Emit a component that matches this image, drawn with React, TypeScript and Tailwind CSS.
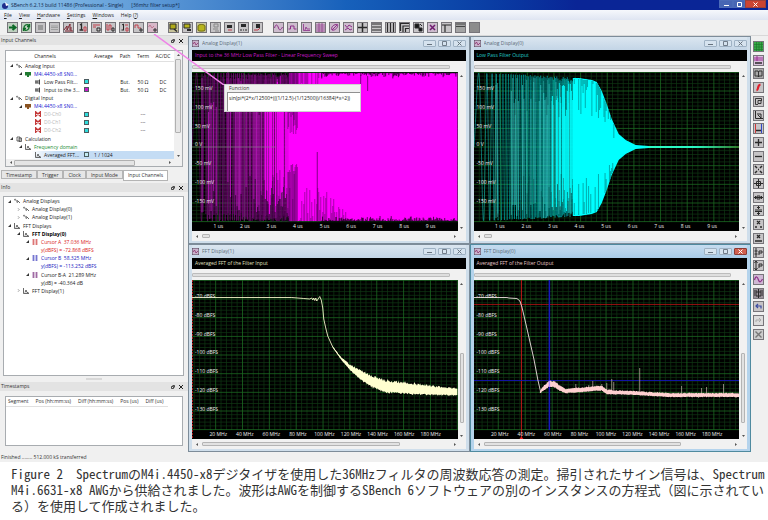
import { Fragment, type ReactNode } from 'react';
import clsx from 'clsx';

type Point = [number, number];

// small seeded generator so the traces look the same on every render
function createRandom(seed: number) {
  let value = seed;
  return () => {
    value = (value * 16807) % 2147483647;
    return value / 2147483647;
  };
}

function interpolate(points: Point[], x: number) {
  for (let i = 1; i < points.length; i++) {
    const [x0, y0] = points[i - 1];
    const [x1, y1] = points[i];
    if (x <= x1) return y0 + ((y1 - y0) * (x - x0)) / (x1 - x0);
  }
  return points[points.length - 1][1];
}

function chirpPath(amplitude: Point[], start: number, end: number) {
  let d = '';
  for (let x = start; x <= end; x += 0.12) {
    const y = 75 - interpolate(amplitude, x) * Math.sin(2 * Math.PI * (0.03 * x + 0.0052 * x * x));
    d += `${d ? 'L' : 'M'}${x.toFixed(2)} ${y.toFixed(1)}`;
  }
  return d;
}

function bandPath(center: Point[], half: Point[], seed: number) {
  const random = createRandom(seed);
  const top: string[] = [];
  const bottom: string[] = [];
  for (let x = center[0][0]; x <= 266; x += 0.6) {
    const y = interpolate(center, x);
    const h = interpolate(half, x);
    top.push(`${x.toFixed(1)} ${(y - h * (0.65 + random() * 0.5)).toFixed(1)}`);
    bottom.unshift(`${x.toFixed(1)} ${(y + h * (0.75 + random() * 0.35)).toFixed(1)}`);
  }
  return `M${top.join('L')}L${bottom.join('L')}Z`;
}

const flatEnvelope: Point[] = [[0, 74], [266, 74]];

const filterEnvelope: Point[] = [
  [0, 74], [62, 72], [105, 69], [118, 67], [123, 65], [128, 56], [133, 43], [138, 28],
  [145, 13], [152, 7], [162, 2], [175, 1], [220, 1], [266, 0],
];

function GridLines({ offset, pitch }: { offset: number; pitch: number }) {
  const minor: string[] = [];
  const major: string[] = [];
  for (let i = -5; i < 60; i++) {
    const x = offset + (i * pitch) / 5;
    if (x > 0 && x < 266) (i % 5 === 0 ? major : minor).push(`M${x.toFixed(1)} 0V150`);
  }
  for (let i = 0; i <= 40; i++) {
    const y = 0.4 + i * 3.73;
    (i % 5 === 0 ? major : minor).push(`M0 ${y.toFixed(1)}H266`);
  }
  return (
    <g fill="none">
      <path d={minor.join('')} stroke="#103814" strokeWidth="0.7" />
      <path d={major.join('')} stroke="#1c6822" strokeWidth="0.8" />
    </g>
  );
}

function InputSweep() {
  const random = createRandom(77);
  let dim = '';
  let bright = '';
  let solid = '';
  let dark = '';
  let teeth = '';
  for (let x = 10; x < 100; x += 1.3) {
    if (random() < 0.15 + x / 200) bright += `M${x.toFixed(1)} ${(random() * 45).toFixed(0)}V${(148 - random() * 45).toFixed(0)}`;
    if (random() < 0.7) dim += `M${x.toFixed(1)} ${(2 + random() * 6).toFixed(0)}V${(148 - random() * 8).toFixed(0)}`;
  }
  for (let x = 66; x < 98; x += 1) {
    if (random() < (x - 60) / 36) solid += `M${x}.5 ${(2 + random() * 30).toFixed(0)}V${(146 - random() * 34).toFixed(0)}`;
  }
  for (let x = 60; x < 156; x += 1) {
    const reach = Math.max(0, 1 - Math.abs(x - 100) / 62);
    if (random() < 0.6) dark += `M${x} 150V${(148 - reach * random() * 66).toFixed(0)}`;
    if (random() < 0.6 && x < 136) dark += `M${x} 0V${(reach * random() * 56).toFixed(0)}`;
  }
  for (let x = 96; x < 106; x += 0.8) dark += `M${x.toFixed(1)} 150V${(92 + random() * 10).toFixed(0)}M${x.toFixed(1)} 0V${(38 + random() * 25).toFixed(0)}`;
  for (let x = 130; x < 266; x += 0.8) {
    teeth += `M${x.toFixed(1)} 0v${(1 + random() * random() * 6).toFixed(1)}`;
    teeth += `M${x.toFixed(1)} 150v-${(1 + random() * random() * 6).toFixed(1)}`;
  }
  return (
    <g fill="none">
      <path d={chirpPath(flatEnvelope, 0, 98)} stroke="#a800a8" strokeWidth="0.36" />
      <path d={dim} stroke="#7c0a80" strokeWidth="0.6" />
      <path d={bright} stroke="#d81cdc" strokeWidth="0.6" />
      <path d={solid} stroke="#ff00ff" strokeWidth="1" />
      <path d="M97 1H266V149H97Z" fill="#ff00ff" />
      <path d={dark} stroke="#2a0430" strokeOpacity="0.65" strokeWidth="0.6" />
      <path d={teeth} stroke="#08000a" strokeWidth="0.7" />
      <path d="M125.500 80V150M176 4V19M169 3V13" stroke="#4c0050" strokeWidth="0.7" />
      <path d="M0 75H84" stroke="#8a8a8a" strokeWidth="0.5" />
    </g>
  );
}

function OutputSweep() {
  const random = createRandom(421);
  let bright = '';
  let solid = '';
  let dark = '';
  for (let x = 22; x < 97; x += 1.4) {
    const a = interpolate(filterEnvelope, x);
    if (random() < 0.25 + x / 180) bright += `M${x.toFixed(1)} ${(75 - a + random() * 30).toFixed(0)}V${(75 + a - random() * 20).toFixed(0)}`;
  }
  for (let x = 78; x < 101; x += 1) {
    const a = interpolate(filterEnvelope, x);
    if (random() < (x - 70) / 30) solid += `M${x}.5 ${(75 - a + random() * 40).toFixed(0)}V${(75 + a - random() * 40).toFixed(0)}`;
  }
  for (let x = 40; x < 142; x += 1.1) {
    const a = interpolate(filterEnvelope, x);
    if (random() < 0.5) dark += `M${x.toFixed(1)} ${(75 - a + 1).toFixed(0)}v${(random() * a * 0.6).toFixed(0)}`;
    if (random() < 0.5) dark += `M${x.toFixed(1)} ${(75 + a - 1).toFixed(0)}v-${(random() * a * 0.6).toFixed(0)}`;
  }
  const edge = filterEnvelope.filter(([x]) => x > 100);
  const upper = edge.map(([x, a]) => `${x} ${75 - a}`);
  const lower = edge.map(([x, a]) => `${x} ${75 + a}`).reverse();
  return (
    <g fill="none">
      <path d={chirpPath(filterEnvelope, 0, 24)} stroke="#10b8b8" strokeWidth="0.6" />
      <path d={chirpPath(filterEnvelope, 24, 122)} stroke="#00c8c8" strokeWidth="0.42" />
      <path d={bright} stroke="#50e8e8" strokeWidth="0.5" />
      <path d={solid} stroke="#00ffff" strokeWidth="1" />
      <path d={`M99 6L${upper.join('L')}L${lower.join('L')}L99 144Z`} fill="#00ffff" />
      <path d={dark} stroke="#023c3c" strokeOpacity="0.7" strokeWidth="0.6" />
      <path d="M175 75H266" stroke="#7cff5c" strokeWidth="0.7" />
      <path d="M170 75H225" stroke="#30f0c0" strokeWidth="0.8" />
    </g>
  );
}

function InputSpectrum() {
  const center: Point[] = [[141, 67], [149, 78], [159, 88], [169, 95], [179, 101], [193, 106], [213, 108], [236, 110], [266, 112]];
  const half: Point[] = [[141, 0.6], [149, 1.3], [159, 3], [169, 5], [179, 6], [193, 6.5], [213, 6], [236, 5], [266, 3.6]];
  return (
    <g fill="none">
      <path d="M0.500 0V159" stroke="#b01818" strokeDasharray="2 1" />
      <path d="M0 17.500H100L112 18.500L118 19L120 18L121 20L122 18L123 20.500L124 18L125 21L128 16.500L129.500 20L131 28L132 39L134 48L136 56L141 67L149 78" stroke="#f4f4c8" strokeWidth="0.9" />
      <path d={bandPath(center, half, 913)} fill="#ffffd0" />
    </g>
  );
}

function OutputSpectrum() {
  const center: Point[] = [[66, 112], [70, 108], [75, 104], [80, 104], [86, 108], [92, 111], [105, 110], [128, 108], [133, 112], [160, 113], [195, 115], [266, 115]];
  const half: Point[] = [[66, 1.2], [70, 2.5], [78, 3.5], [92, 2.4], [128, 2.6], [150, 2], [266, 2.2]];
  return (
    <g fill="none">
      <path d="M0 24.500H266" stroke="#b01212" strokeWidth="0.8" />
      <path d="M47.500 0V159" stroke="#c01818" />
      <path d="M0 100.500H266" stroke="#1414b4" strokeWidth="0.9" />
      <path d="M75.500 0V150" stroke="#1818c0" strokeWidth="1.500" />
      <path d="M0 17.500H33L35 18L43 18.500L46 21L48 27L52 44L60 79L64 100L67 113" stroke="#f2e2e2" strokeWidth="0.9" />
      <path d="M166 88V112M138 99V110M140 102V110M133 103V110M128 104V108M119 101V108M115 105V109M102 104V110M208 106V114M228 108V114M233 107V114M250 104V114M225 113V118" stroke="#c8b4ac" strokeWidth="0.7" />
      <path d={bandPath(center, half, 5311)} fill="#ffd0d0" />
      <path d="M75.500 101V107" stroke="#b890ff" strokeWidth="1.500" />
      <path d="M45.500 159L47.500 156.500L49.500 159Z" fill="#e02020" />
    </g>
  );
}

interface DisplayProps {
  title: string;
  caption: string;
  captionClass: string;
  yLabels: string[];
  xLabels: string[];
  gridOffset: number;
  gridPitch: number;
  active?: boolean;
  spectrum?: boolean;
  children: ReactNode;
}

function WindowButtons({ active }: { active?: boolean }) {
  return (
    <div className="flex gap-[2px]">
      {['Minimize', 'Maximize', 'Close'].map((label, i) => (
        <button
          key={label}
          aria-label={label}
          className={clsx(
            'flex h-[7px] w-[13px] items-center justify-center rounded-[1px] border',
            active && i === 2 ? 'border-[#8c3b36] bg-[#d2604f] text-white' : 'border-[#9fb2c4] bg-[#d6e3ef] text-[#66727e]',
          )}
        >
          <svg className="size-[5px]" viewBox="0 0 5 5" fill="none" stroke="currentColor">
            {i === 0 && <path d="M0 3.500H5" />}
            {i === 1 && <path d="M0.500 0.500H4.500V4.500H0.500Z" strokeWidth="0.9" />}
            {i === 2 && <path d="M0.500 0.500L4.500 4.500M4.500 0.500L0.500 4.500" />}
          </svg>
        </button>
      ))}
    </div>
  );
}

function DisplayWindow({ title, caption, captionClass, yLabels, xLabels, gridOffset, gridPitch, active, spectrum, children }: DisplayProps) {
  return (
    <section
      className={clsx(
        'flex h-[208px] min-w-0 flex-col border px-[3px] pb-[2px]',
        active ? 'border-[#4f8a9f] bg-[#b4d3ec]' : 'border-[#7d8c99] bg-[#cfdeeb]',
      )}
    >
      <header className={clsx('flex h-[13px] items-center gap-[3px] bg-linear-to-b', active ? 'from-[#c6dcef] to-[#a9cbe8]' : 'from-[#dbe6f0] to-[#c3d5e6]')}>
        <svg className="size-[7px]" viewBox="0 0 7 7">
          <path d="M0 0H7V7H0Z" fill="#c9b3cc" stroke="#4c3f52" />
          <path d="M1 4L2.500 2L4 5L6 3" stroke="#8a2f6c" fill="none" strokeWidth="0.8" />
        </svg>
        <h2 className="flex-1 truncate text-[5px] leading-[9px] text-[#5c6b78]">{title}</h2>
        <WindowButtons active={active} />
      </header>
      <div className={clsx('h-[11px] shrink-0 bg-black px-[3px] text-[5px] leading-[11px]', captionClass)}>{caption}</div>
      <div className="flex min-h-0 flex-1 flex-col bg-[#f1f1f1]">
        <div className="flex h-[11px] items-center pr-[16px]">
          <div className="h-[4px] flex-1 rounded-[1px] border border-[#bcbcbc] bg-[#dedede]" />
        </div>
        <div className="flex">
          <div className="relative h-[159px] flex-1 overflow-hidden bg-black">
            <svg className="absolute inset-0 size-full" viewBox="0 0 266 159" preserveAspectRatio="none">
              <GridLines offset={gridOffset} pitch={gridPitch} />
              {children}
            </svg>
            <div className="absolute top-[12px] left-[3px] flex h-[121px] flex-col justify-between text-[5px] leading-[8px] text-[#f0f0f0]">
              {yLabels.map((label) => <span key={label}>{label}</span>)}
            </div>
            <div className="absolute bottom-0 left-[13px] flex h-[9px] w-[90%] text-[5px] leading-[9px] text-[#f0f0f0]">
              {xLabels.map((label) => <span key={label} className="flex-1 text-center whitespace-nowrap">{label}</span>)}
            </div>
          </div>
          <div className="flex w-[8px] flex-col items-center justify-between py-[2px]">
            <Arrow direction="up" />
            {spectrum && <div className="mt-[56px] h-[70px] w-[4px] rounded-[1px] border border-[#b4b4b4] bg-[#e2e2e2]" />}
            <Arrow direction="down" />
          </div>
        </div>
        <div className="flex h-[10px] items-center gap-[4px] pr-[10px] pl-[3px]">
          <Arrow direction="left" />
          <div className={clsx('h-[4px] rounded-[1px] border border-[#b4b4b4] bg-[#e2e2e2]', spectrum ? 'w-[76%]' : 'w-[8px]')} />
          <div className="ml-auto"><Arrow direction="right" /></div>
        </div>
      </div>
    </section>
  );
}

function Arrow({ direction }: { direction: 'up' | 'down' | 'left' | 'right' }) {
  const shapes = {
    up: 'M0 3L1.500 1L3 3Z',
    down: 'M0 1L1.500 3L3 1Z',
    left: 'M3 0L1 1.500L3 3Z',
    right: 'M1 0L3 1.500L1 3Z',
  };
  return (
    <svg className="size-[3px] shrink-0" viewBox="0 0 3 3">
      <path d={shapes[direction]} fill="#555" />
    </svg>
  );
}

interface ToolIcon {
  label: string;
  bg?: string;
  drawing: ReactNode;
}

const wave = '#8c3088';
const dark = '#2a2a2a';
const red = '#c2404c';

const sourceIcons: ToolIcon[] = [
  { label: 'Start', bg: '#bfcfbf', drawing: <path d="M2 5.500H8M5.500 3L8.500 5.500L5.500 8" stroke="#0c6a26" strokeWidth="2" /> },
  { label: 'Loop', bg: '#bfcfbf', drawing: <path d="M3 6A3 3 0 0 1 8 3.500M8 5A3 3 0 0 1 3 7.500M8.500 2V4.500H6M2.500 9V6.500H5" stroke="#0c6a26" strokeWidth="1.300" /> },
  { label: 'Stop', drawing: <path d="M3 3H8V8H3Z" fill="#9a9a9a" stroke="none" /> },
  { label: 'Force trigger', drawing: <path d="M2 4H9M2 5.500H9M2 7.500H9" stroke="#a0a0a0" /> },
  { label: 'Record', drawing: <path d="M1 8L4 4V8L7 2V8M8 5V9M2 9H10" stroke="#7c2430" /> },
  { label: 'Single', drawing: <><path d="M3 3L4.500 2V8M2.500 8H6" stroke={dark} strokeWidth="1.300" /><path d="M7 5H9V9H7Z" stroke={red} /></> },
  { label: 'Average', drawing: <><path d="M2 3H9M2 5H5" stroke={red} /><path d="M6 6H9V9H6Z" stroke={dark} /></> },
  { label: 'Gate', drawing: <><path d="M2 2V8H4V3H6V8" stroke={red} /><path d="M7 6H9V9H7Z" stroke={dark} /></> },
  { label: 'Timer', drawing: <><path d="M3 3L4.500 2V8M2.500 8H5" stroke={dark} /><path d="M6 3H9M7 6H9V9H7Z" stroke={red} /></> },
  { label: 'Sequence', drawing: <><path d="M2 6V3H5V6H8" stroke={red} /><path d="M7 7H9V9H7Z" stroke={dark} /></> },
  { label: 'Function generator', bg: '#d8b8c8', drawing: <><path d="M1.500 5L3 3L5 6L7 4" stroke="#c07890" /><path d="M7 7H9V9H7Z" stroke={dark} /></> },
];

const fileIcons: ToolIcon[] = [
  { label: 'Save as', bg: '#c8c49a', drawing: <><path d="M2 2H8V7H2Z" fill="#b0aa18" stroke={dark} /><path d="M6 7L9 9.500" stroke={dark} strokeWidth="1.500" /></> },
  { label: 'Save', drawing: <><path d="M2 2H8V6H2Z" fill="#b8b41c" stroke={dark} /><path d="M5 7H9V9H5Z" fill={dark} /></> },
  { label: 'Open', bg: '#c9c69e', drawing: <path d="M2 4C2 2 9 2 9 4V8C9 9.500 2 9.500 2 8Z" fill="#b8b41c" stroke="#6a6710" /> },
  { label: 'Export', drawing: <path d="M4 2H8V5H4ZM3 7H8M5 9H9" stroke="#888" /> },
  { label: 'Print', drawing: <><path d="M3 3H8V6H3Z" fill={dark} /><path d="M4 8H8" stroke={red} /></> },
  { label: 'Report', drawing: <><path d="M3 2H8V5H3Z" fill={dark} /><path d="M2 8H4M5 8H6M7 8H9" stroke={dark} /></> },
  { label: 'Import', drawing: <><path d="M4 2H8V6H4Z" fill={dark} /><path d="M2 8H6L8 6" stroke={red} /></> },
];

const displayIcons: ToolIcon[] = [
  { label: 'Analog display', bg: '#cdbccd', drawing: <path d="M1.500 6C3 1 4.500 3 5.500 6S8 8 9.500 5" stroke={wave} /> },
  { label: 'Digital display', bg: '#cdbccd', drawing: <path d="M1.500 7H3.500V4H7V7H9.500" stroke={wave} /> },
  { label: 'FFT display', bg: '#cdbccd', drawing: <path d="M2.500 2V8.500H9M4 8L5 5L6 7H9" stroke={wave} strokeWidth="0.8" /> },
  { label: 'Table', bg: '#cdbccd', drawing: <path d="M1 3H10M1 5H10M1 7H10M1 9H10M4 1V10M7 1V10" stroke={wave} strokeWidth="0.7" /> },
  { label: 'XY display', bg: '#cdbccd', drawing: <path d="M3 8C1.500 5 5 2 8.500 2.500C9.500 5 6 9 3 8ZM3 8L8 3" stroke={wave} /> },
  { label: 'Histogram', bg: '#cdbccd', drawing: <path d="M2 3L4 5.500L6 3L9 5M2 8L5 6L7 8L9 7" stroke={wave} /> },
  { label: 'Tile', drawing: <path d="M1 5.500H10M5.500 1V10" stroke={dark} strokeWidth="1.500" /> },
  { label: 'Tile horizontally', drawing: <path d="M1 2H10M1 5H10M1 8H10" stroke={dark} strokeWidth="1.200" /> },
  { label: 'Tile vertically', drawing: <path d="M2.500 1V10M5.500 1V10M8.500 1V10" stroke={dark} strokeWidth="1.200" /> },
  { label: 'Cascade', drawing: <path d="M1.500 9V1.500H10M4 10V4H10M6.500 10V6.500H10" stroke={dark} strokeWidth="1.200" /> },
  { label: 'Arrange', drawing: <path d="M2 2H6V6H2ZM6 6H9V9H6ZM7 2L9 4" fill="#181818" stroke={dark} /> },
  { label: 'Close all', bg: '#cdbccd', drawing: <path d="M3 3L8 8M8 3L3 8" stroke="#701c70" strokeWidth="1.500" /> },
  { label: 'Dock left', drawing: <path d="M1 3H10M4 3V10" stroke={dark} strokeWidth="1.200" /> },
  { label: 'Dock top', bg: '#a4a4a4', drawing: <path d="M1 2H10M1 4.500H10" stroke="#444" /> },
  { label: 'Full area', bg: '#8c8c8c', drawing: null },
];

const sideIcons: ToolIcon[] = [
  { label: 'Grid', bg: '#38a848', drawing: <path d="M1 3.500H10M1 6H10M1 8.500H10M3.500 1V10M6 1V10M8.500 1V10" stroke="#1c7a2c" strokeWidth="0.7" /> },
  { label: 'Color grid', bg: '#d8c0dc', drawing: <><path d="M1 3H10M1 5H10M4 1V6" stroke="#9c2c94" /><path d="M2 8H9" stroke={dark} strokeWidth="1.500" /></> },
  { label: 'Manual', bg: '#a8a8a8', drawing: <path d="M2 3H5L5.500 4L6 3H9V8H6L5.500 9L5 8H2ZM5.500 4V9" stroke={dark} strokeWidth="0.9" /> },
  { label: 'Persistence', drawing: <path d="M3.500 8.500C6 8 4 3 7.500 2.500" stroke="#e0202c" strokeWidth="2.200" /> },
  { label: 'Zoom area', drawing: <path d="M5 8.500H2.500V2.500H8.500V5M5 4.500H8V7.500H5Z" stroke={dark} strokeWidth="0.9" /> },
  { label: 'Axis', drawing: <path d="M2.500 1V8.500H10M4 4H8V8M5 5L8 8" stroke={dark} /> },
  { label: 'Cursor', drawing: <><path d="M2.500 1V10" stroke="#d03838" /><path d="M8.500 1V10" stroke="#3048c8" /><path d="M3 7.500H8" stroke={dark} strokeWidth="1.500" /></> },
  { label: 'Zoom in', drawing: <path d="M5.500 2V9M2 5.500H9" stroke={dark} strokeWidth="1.300" /> },
  { label: 'Zoom out', drawing: <path d="M2 5.500H9" stroke={dark} strokeWidth="1.300" /> },
  { label: 'Expand', drawing: <path d="M2 2L4 4M9 2L7 4M2 9L4 7M9 9L7 7M5 5.500H6" stroke={dark} strokeWidth="1.500" /> },
  { label: 'Fit', drawing: <path d="M5.500 1V10M1 5.500H10M3.500 3.500H7.500V7.500H3.500Z" stroke={dark} /> },
  { label: 'Fit X', drawing: <path d="M1 5.500H10M4 4H7V7H4ZM2.500 4V7M8.500 4V7" stroke={dark} /> },
  { label: 'Fit Y', drawing: <path d="M5.500 1V4M5.500 7V10M2 5H9M2 6.500H9M4 2.500H7M4 8.500H7" stroke={dark} /> },
  { label: 'Shrink X', drawing: <path d="M4 2L7 5M7 2L4 5M2 8H4M7 8H9" stroke={dark} strokeWidth="1.300" /> },
  { label: 'Stretch X', drawing: <path d="M4 2L7 5M7 2L4 5M2 8H9" stroke={dark} strokeWidth="1.300" /> },
  { label: 'Shrink Y', drawing: <path d="M3 1V10M1.500 4H4.500M1.500 7H4.500M6 8V4H9V6H6" stroke={dark} /> },
  { label: 'Stretch Y', drawing: <path d="M3 1V10M1.500 3L3 1L4.500 3M1.500 8L3 10L4.500 8M6 8V4H9V6H6" stroke={dark} /> },
  { label: 'Signal', bg: '#cfb8d4', drawing: <path d="M1.500 6C3 1 4.500 3 5.500 6S8 8 9.500 5" stroke={wave} strokeWidth="1.200" /> },
  { label: 'Split', bg: '#9a929a', drawing: <path d="M1 3H4V5H1M10 3H7V5H10M1 7H4V9M10 7H7V9M5.500 1V10" stroke={dark} /> },
  { label: 'Undo', drawing: <path d="M5 3L3 5L5 7M3 5H8V7.500" stroke="#3a4aa0" strokeWidth="1.200" /> },
  { label: 'Redo', bg: '#dcdcdc', drawing: <path d="M3 7V5H8L6 3M8 5L6 7" stroke="#aaa" /> },
  { label: 'Clear', bg: '#cccccc', drawing: <path d="M2.500 2.500L8.500 8.500M8.500 2.500L2.500 8.500" stroke="#777" strokeWidth="1.400" /> },
];

function ToolButton({ icon }: { icon: ToolIcon }) {
  return (
    <button aria-label={icon.label} className="size-[11px] shrink-0">
      <svg className="block size-full" viewBox="0 0 11 11" fill="none">
        <rect x="0.500" y="0.500" width="10" height="10" fill={icon.bg ?? '#c6c4c6'} stroke="#77757a" />
        {icon.drawing}
      </svg>
    </button>
  );
}

function PanelHeader({ title }: { title: string }) {
  return (
    <div className="flex h-[9px] items-center justify-between bg-[#e3e3e3] pr-[5px] pl-[1px]">
      <h2 className="text-[5px] leading-[9px] text-[#333]">{title}</h2>
      <div className="flex gap-[4px]">
        <button aria-label={`Float ${title}`} className="size-[4px]">
          <svg className="block size-full" viewBox="0 0 4 4"><path d="M1.500 0.500H3.500V2.500M0.500 1.500H2.500V3.500H0.500Z" fill="none" stroke="#222" strokeWidth="0.8" /></svg>
        </button>
        <button aria-label={`Close ${title}`} className="size-[4px]">
          <svg className="block size-full" viewBox="0 0 4 4"><path d="M0 0L4 4M4 0L0 4" stroke="#222" /></svg>
        </button>
      </div>
    </div>
  );
}

type TreeGlyph = 'wave' | 'card' | 'brownCard' | 'input' | 'off' | 'calc' | 'fft' | 'cursor';

function Glyph({ kind, color = '#444' }: { kind: TreeGlyph; color?: string }) {
  return (
    <svg className="size-[6px] shrink-0" viewBox="0 0 6 6" fill="none">
      {kind === 'wave' && <path d="M0 2.500C1 0 1.500 1 2 2.500S3.500 3 3.500 2M3 5L4 3L6 5" stroke={color} strokeWidth="0.8" />}
      {(kind === 'card' || kind === 'brownCard') && <path d="M0 1H6V4.500H4V6H2V4.500H0Z" fill={kind === 'card' ? '#1f7a30' : '#8a5220'} />}
      {kind === 'input' && <path d="M0 2H2V4H0ZM3 1V5M4.500 0.500V5.500" stroke={color} />}
      {kind === 'off' && <path d="M0.500 0V6M5.500 0V6M1 1L5 5M5 1L1 5" stroke="#c43a3a" strokeWidth="1.200" />}
      {kind === 'calc' && <path d="M1 1H4V5H1ZM3 2H5.500V5.500H3Z" stroke={color} strokeWidth="0.8" />}
      {kind === 'fft' && <path d="M0.500 0V5.500H6M2 4.500L3 2L4 4.500H5.500" stroke={color} strokeWidth="0.8" />}
      {kind === 'cursor' && <path d="M0 1H6M0 5H6M1.500 0V6M4.500 0V6M0 3H6" stroke={color} strokeWidth="0.6" />}
    </svg>
  );
}

function Expander({ open }: { open?: boolean }) {
  return (
    <svg className="size-[3px] shrink-0" viewBox="0 0 3 3">
      {open ? <path d="M3 0V3H0Z" fill="#333" /> : <path d="M0.500 0L2.500 1.500L0.500 3" fill="none" stroke="#999" strokeWidth="0.7" />}
    </svg>
  );
}

interface ChannelRow {
  name: string;
  indent: string;
  glyph: TreeGlyph;
  open?: boolean;
  nameClass?: string;
  swatch?: string;
  cells?: string[];
  selected?: boolean;
}

const channelRows: ChannelRow[] = [
  { name: 'Analog Input', indent: 'pl-[4px]', glyph: 'wave', open: true },
  { name: 'M4i.4450-x8 SN0...', indent: 'pl-[13px]', glyph: 'card', open: true, nameClass: 'text-[#2020d0]' },
  { name: 'Low Pass Filt...', indent: 'pl-[29px]', glyph: 'input', swatch: 'bg-[#30dcdc]', cells: ['', 'But.', '50 Ω', 'DC'] },
  { name: 'Input to the 3...', indent: 'pl-[29px]', glyph: 'input', swatch: 'bg-[#c818c8]', cells: ['', 'But.', '50 Ω', 'DC'] },
  { name: 'Digital Input', indent: 'pl-[4px]', glyph: 'wave', open: true },
  { name: 'M4i.4450-x8 SN0...', indent: 'pl-[13px]', glyph: 'brownCard', open: true, nameClass: 'text-[#2020d0]' },
  { name: 'D0-Ch0', indent: 'pl-[29px]', glyph: 'off', nameClass: 'text-[#b8b8b8]', swatch: 'bg-[#30dcdc]', cells: ['', '', '---', ''] },
  { name: 'D0-Ch1', indent: 'pl-[29px]', glyph: 'off', nameClass: 'text-[#b8b8b8]', swatch: 'bg-[#30dcdc]', cells: ['', '', '---', ''] },
  { name: 'D0-Ch2', indent: 'pl-[29px]', glyph: 'off', nameClass: 'text-[#b8b8b8]', swatch: 'bg-[#30dcdc]', cells: ['', '', '---', ''] },
  { name: 'Calculation', indent: 'pl-[4px]', glyph: 'calc', open: true },
  { name: 'Frequency domain', indent: 'pl-[13px]', glyph: 'fft', open: true, nameClass: 'text-[#208a30]' },
  { name: 'Averaged FFT...', indent: 'pl-[29px]', glyph: 'fft', swatch: 'bg-[#c4ecf4]', cells: ['1 / 1024', '', '', ''], selected: true },
];

function ChannelsPanel() {
  return (
    <section>
      <PanelHeader title="Input Channels" />
      <div className="mx-[5px] mt-[5px] border border-[#a8acb0] bg-white">
        <div className="flex">
          <table className="h-[108px] flex-1 table-fixed text-[5px] leading-[8px] text-[#222]">
            <colgroup>
              <col className="w-[78px]" />
              <col className="w-[10px]" />
              <col className="w-[22px]" />
              <col className="w-[18px]" />
              <col className="w-[18px]" />
              <col />
            </colgroup>
            <thead>
              <tr className="h-[10px] border-b border-[#e0e0e0]">
                <th className="p-0 font-normal">Channels</th>
                <th className="p-0" />
                <th className="p-0 text-left font-normal">Average</th>
                <th className="p-0 font-normal">Path</th>
                <th className="p-0 font-normal">Term</th>
                <th className="p-0 font-normal">AC/DC</th>
              </tr>
            </thead>
            <tbody>
              {channelRows.map((row, i) => (
                <tr key={i} className={clsx('h-[8px]', row.selected && 'bg-linear-to-r from-white from-15% to-[#c4dcf4] to-30%')}>
                  <td className="p-0">
                    <div className={clsx('flex items-center gap-[3px] whitespace-nowrap', row.indent)}>
                      {row.open && <Expander open />}
                      <Glyph kind={row.glyph} />
                      <span className={row.nameClass}>{row.name}</span>
                    </div>
                  </td>
                  <td className="p-0">{row.swatch && <div className={clsx('size-[5px] border border-[#4c5c60]', row.swatch)} />}</td>
                  {(row.cells ?? ['', '', '', '']).map((cell, j) => (
                    <td key={j} className={clsx('p-0 whitespace-nowrap', j > 0 && 'text-center')}>{cell}</td>
                  ))}
                </tr>
              ))}
            </tbody>
          </table>
          <div className="flex w-[8px] flex-col items-center bg-[#f0f0f0] py-[2px]">
            <Arrow direction="up" />
            <div className="my-[3px] h-[74px] w-[6px] rounded-[1px] border border-[#b0b0b0] bg-[#e4e4e4]" />
            <div className="mt-auto"><Arrow direction="down" /></div>
          </div>
        </div>
        <div className="flex h-[7px] items-center bg-[#f0f0f0] px-[3px]">
          <Arrow direction="left" />
          <div className="ml-[2px] h-[6px] w-[121px] rounded-[1px] border border-[#b0b0b0] bg-[#e4e4e4]" />
          <div className="mr-[8px] ml-auto"><Arrow direction="right" /></div>
        </div>
      </div>
      <nav className="mt-[3px] flex h-[11px] pl-[1px] text-[5px] leading-[9px] text-[#333]">
        {['Timestamp', 'Trigger', 'Clock', 'Input Mode', 'Input Channels'].map((tab) => (
          <button
            key={tab}
            className={clsx('border border-[#b4b4b4] px-[4px] whitespace-nowrap', tab === 'Input Channels' ? 'bg-white' : 'mb-[2px] bg-[#e6e6e6]')}
          >
            {tab}
          </button>
        ))}
      </nav>
    </section>
  );
}

const infoRows = [
  { text: 'Analog Displays', indent: 'pl-[4px]', glyph: 'wave', open: true },
  { text: 'Analog Display(0)', indent: 'pl-[13px]', glyph: 'wave', open: false },
  { text: 'Analog Display(1)', indent: 'pl-[13px]', glyph: 'wave', open: false },
  { text: 'FFT Displays', indent: 'pl-[4px]', glyph: 'fft', open: true },
  { text: 'FFT Display(0)', indent: 'pl-[13px]', glyph: 'fft', open: true, color: 'font-bold text-black' },
  { text: 'Cursor A  37.036 MHz', indent: 'pl-[22px]', glyph: 'cursor', glyphColor: '#d04040', open: true, color: 'text-[#d82020]' },
  { text: 'y(dBFS) = -72.868 dBFS', indent: 'pl-[37px]', color: 'text-[#d82020]' },
  { text: 'Cursor B  58.325 MHz', indent: 'pl-[22px]', glyph: 'cursor', glyphColor: '#4040c0', open: true, color: 'text-[#2020c0]' },
  { text: 'y(dBFS) = -113.252 dBFS', indent: 'pl-[37px]', color: 'text-[#2020c0]' },
  { text: 'Cursor B-A  21.289 MHz', indent: 'pl-[22px]', glyph: 'cursor', glyphColor: '#7a3080', open: true },
  { text: 'y(dB) = -40.364 dB', indent: 'pl-[37px]' },
  { text: 'FFT Display(1)', indent: 'pl-[13px]', glyph: 'fft', open: false },
];

function InfoPanel() {
  return (
    <section>
      <PanelHeader title="Info" />
      <div className="mt-[4px] mr-[4px] ml-[3px] h-[180px] border border-[#a8acb0] bg-white">
        <ul className="grid h-[98px] grid-rows-12 text-[5px] leading-[8px] text-[#222]">
          {infoRows.map((row) => (
            <li key={row.text} className={clsx('flex items-center gap-[3px] whitespace-pre', row.indent, row.color)}>
              {row.glyph && <Expander open={row.open} />}
              {row.glyph && <Glyph kind={row.glyph as TreeGlyph} color={row.glyphColor} />}
              {row.text}
            </li>
          ))}
        </ul>
      </div>
    </section>
  );
}

function TimestampsPanel() {
  return (
    <section>
      <PanelHeader title="Timestamps" />
      <div className="mx-[5px] mt-[5px] h-[50px] border border-[#a8acb0] bg-white">
        <table className="text-left text-[5px] leading-[9px] text-[#333]">
          <thead>
            <tr className="border-b border-[#e0e0e0]">
              {['Segment', 'Pos (hh:mm:ss)', 'Diff (hh:mm:ss)', 'Pos (us)', 'Diff (us)'].map((head) => (
                <th key={head} className="py-0 pr-[5px] pl-[2px] font-normal whitespace-nowrap">{head}</th>
              ))}
            </tr>
          </thead>
        </table>
      </div>
    </section>
  );
}

const voltLabels = ['150 mV', '100 mV', '50 mV', '0 V', '-50 mV', '-100 mV', '-150 mV'];
const levelLabels = ['-70 dBFS', '-80 dBFS', '-90 dBFS', '-100 dBFS', '-110 dBFS', '-120 dBFS', '-130 dBFS'];
const timeLabels = ['1 us', '2 us', '3 us', '4 us', '5 us', '6 us', '7 us', '8 us', '9 us'];
const frequencyLabels = ['20 MHz', '40 MHz', '60 MHz', '80 MHz', '100 MHz', '120 MHz', '140 MHz', '160 MHz', '180 MHz'];

const figureLines = [
  'Figure 2　SpectrumのM4i.4450-x8デジタイザを使用した36MHzフィルタの周波数応答の測定。掃引されたサイン信号は、Spectrum',
  'M4i.6631-x8 AWGから供給されました。波形はAWGを制御するSBench 6ソフトウェアの別のインスタンスの方程式（図に示されてい',
  'る）を使用して作成されました。',
];

export default function App() {
  return (
    <div className="min-h-screen bg-white">
      <div className="relative bg-[#f0f0f0] font-['Open_Sans','Liberation_Sans',sans-serif]">
        <header className="flex h-[10px] items-center bg-linear-to-r from-[#8fc4ea] via-[#1761bb] via-45% to-[#0a2596] to-75% pr-[2px] pl-[2px] text-[5px] leading-[10px] text-[#10284a]">
          <svg className="mr-[2px] size-[7px]" viewBox="0 0 7 7">
            <circle cx="3" cy="4" r="3" fill="#1c2c8c" />
            <path d="M3 0L7 3L4 4Z" fill="#fff" />
          </svg>
          <h1>SBench 6.2.13 build 11486 (Professional - Single)</h1>
          <span className="ml-[8px]">[36mhz filter setup*]</span>
          <div className="ml-auto flex self-start text-white">
            <button aria-label="Minimize window" className="flex h-[8px] w-[14px] items-center justify-center border border-[#4c6cb8] bg-[#4766b4]">
              <svg className="size-[5px]" viewBox="0 0 5 5"><path d="M0 3.500H5" stroke="currentColor" /></svg>
            </button>
            <button aria-label="Maximize window" className="flex h-[8px] w-[12px] items-center justify-center border border-[#4c6cb8] bg-[#4766b4]">
              <svg className="size-[5px]" viewBox="0 0 5 5"><path d="M0.500 0.500H4.500V4.500H0.500Z" fill="none" stroke="currentColor" /></svg>
            </button>
            <button aria-label="Close window" className="flex h-[8px] w-[21px] items-center justify-center border border-[#a04038] bg-[#cc4432]">
              <svg className="size-[5px]" viewBox="0 0 5 5"><path d="M0.500 0.500L4.500 4.500M4.500 0.500L0.500 4.500" stroke="currentColor" /></svg>
            </button>
          </div>
        </header>

        <nav className="flex h-[10px] items-center gap-[7px] bg-linear-to-b from-[#f6f8fc] to-[#dfe5f2] pl-[4px] text-[5px] leading-[9px] text-[#222]">
          {['File', 'View', 'Hardware', 'Settings', 'Windows'].map((item) => (
            <button key={item}><u>{item[0]}</u>{item.slice(1)}</button>
          ))}
          <button>Help (<u>?</u>)</button>
        </nav>

        <div className="flex h-[16px] items-center gap-[10px] border-b border-[#d8d8d8] pl-[7px]">
          {[sourceIcons, fileIcons, displayIcons].map((group, i) => (
            <div key={i} className="flex gap-[3px]">
              {group.map((icon) => <ToolButton key={icon.label} icon={icon} />)}
            </div>
          ))}
        </div>

        <div className="flex">
          <aside className="flex w-[188px] shrink-0 flex-col">
            <ChannelsPanel />
            <div className="h-[2px]" />
            <InfoPanel />
            <div className="mx-auto my-[2px] h-[2px] w-[16px] bg-[#d8d8d8]" />
            <TimestampsPanel />
          </aside>

          <main className="grid min-w-0 flex-1 grid-cols-2 content-start">
            <DisplayWindow title="Analog Display(1)" caption="Input to the 36 MHz Low Pass Filter - Linear Frequency Sweep" captionClass="text-[#c818c8]" yLabels={voltLabels} xLabels={timeLabels} gridOffset={26} gridPitch={26.6}>
              <InputSweep />
            </DisplayWindow>
            <DisplayWindow title="Analog Display(0)" caption="Low Pass Filter Output" captionClass="text-[#20c8c8]" yLabels={voltLabels} xLabels={timeLabels} gridOffset={26.7} gridPitch={26.7}>
              <OutputSweep />
            </DisplayWindow>
            <DisplayWindow title="FFT Display(1)" caption="Averaged FFT of the Filter Input" captionClass="text-[#e0e0c0]" yLabels={levelLabels} xLabels={frequencyLabels} gridOffset={23.7} gridPitch={26.9} spectrum>
              <InputSpectrum />
            </DisplayWindow>
            <DisplayWindow title="FFT Display(0)" caption="Averaged FFT of the Filter Output" captionClass="text-[#e8c8c8]" yLabels={levelLabels} xLabels={frequencyLabels} gridOffset={24.3} gridPitch={27} spectrum active>
              <OutputSpectrum />
            </DisplayWindow>
          </main>

          <aside className="flex w-[17px] shrink-0 flex-col pt-[5px] pl-[2px]">
            <div className="flex h-[299px] flex-col justify-between">
              {sideIcons.map((icon) => <ToolButton key={icon.label} icon={icon} />)}
            </div>
          </aside>
        </div>

        <footer className="h-[10px] pl-[1px] text-[5px] leading-[10px] text-[#333]">Finished ........ 512.000 kS transferred</footer>

        {/* function dialog with its pointer to the generator button */}
        <svg className="absolute top-[34px] left-[153px] h-[51px] w-[72px]" viewBox="0 0 72 51">
          <path d="M1 0L71 51" stroke="#f080e8" strokeWidth="1.500" />
        </svg>
        <div className="absolute top-[84px] left-[224px] w-[137px] border border-[#d0d0d0] bg-[#f0f0f0] pl-[2px]">
          <label htmlFor="function" className="block pl-[2px] text-[5px] leading-[7px] text-[#333]">Function</label>
          <textarea
            id="function"
            readOnly
            rows={2}
            className="block h-[19px] w-full resize-none overflow-hidden border-t border-l border-[#909090] bg-white px-[1px] py-[2px] text-[5px] leading-[7px] whitespace-nowrap text-[#222] outline-none"
            value="sin(pi*(2*x/12500+(((1/12.5)-(1/12500))/16384)*x^2))"
          />
        </div>
      </div>

      <p className="px-[11px] pt-[4px] font-['Noto_Sans_CJK_JP',sans-serif] text-[13px] leading-[16px] whitespace-nowrap text-[#333]">
        {figureLines.map((line) => (
          <Fragment key={line}>
            {line.split(/([ -~]+)/).map((part, i) => (
              i % 2 ? <span key={i} className="[font-feature-settings:'hwid']">{part}</span> : part
            ))}
            <br />
          </Fragment>
        ))}
      </p>
    </div>
  );
}
